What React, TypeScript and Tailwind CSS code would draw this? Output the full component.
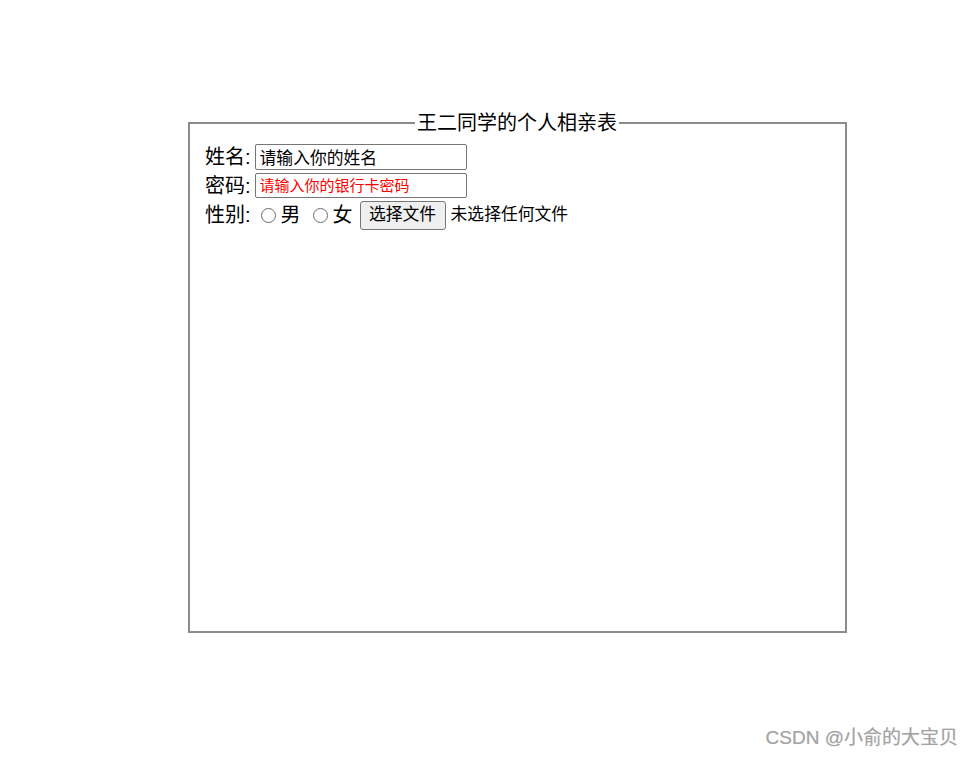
export default function App() {
  return (
    <div className="relative min-h-[757px] w-[973px] bg-white text-black font-['Liberation_Sans','Noto_Sans_CJK_SC',sans-serif]">
      <div className="pl-[188px] pt-[112px]">
        <fieldset className="w-[659px] h-[521px] border-2 border-[#8c8c8c] pl-[15px] pr-4">
          <legend className="mx-auto px-0.5 text-[20px] leading-[22px]">王二同学的个人相亲表</legend>
          <div className="flex flex-col pt-[8px] text-[20px] leading-[24px]">
            <div className="flex items-center h-[29px]">
              <span>姓名:</span>
              <input
                type="text"
                defaultValue="请输入你的姓名"
                className="ml-[4px] w-[212px] h-[26px] border border-[#767676] rounded-[2px] px-[4px] text-[16.8px] leading-[20px] outline-none"
              />
            </div>
            <div className="flex items-center h-[29px]">
              <span>密码:</span>
              <input
                type="password"
                placeholder="请输入你的银行卡密码"
                className="ml-[4px] w-[212px] h-[25px] border border-[#767676] rounded-[2px] px-[4px] text-[15px] leading-[18px] outline-none placeholder:text-[#ff0000]"
              />
            </div>
            <div className="flex items-center h-[30px]">
              <span>性别:</span>
              <label className="flex items-center ml-[10px]">
                <input
                  type="radio"
                  name="sex"
                  className="appearance-none shrink-0 w-[15px] h-[15px] m-0 rounded-full border border-[#6b6b6b] bg-white"
                />
                <span className="ml-[5px]">男</span>
              </label>
              <label className="flex items-center ml-[12px]">
                <input
                  type="radio"
                  name="sex"
                  className="appearance-none shrink-0 w-[15px] h-[15px] m-0 rounded-full border border-[#6b6b6b] bg-white"
                />
                <span className="ml-[5px]">女</span>
              </label>
              <button className="ml-[7px] w-[86px] h-[29px] bg-[#efefef] border border-[#767676] rounded-[3px] text-[16.8px] leading-[20px]">
                选择文件
              </button>
              <span className="ml-[5px] text-[16.8px]">未选择任何文件</span>
            </div>
          </div>
        </fieldset>
      </div>
      <div className="absolute right-[15px] top-[726px] text-[19px] leading-[24px] text-[#a3a3a3] [text-shadow:0_0_1px_#d4d4d4]">
        CSDN @小俞的大宝贝
      </div>
    </div>
  )
}
